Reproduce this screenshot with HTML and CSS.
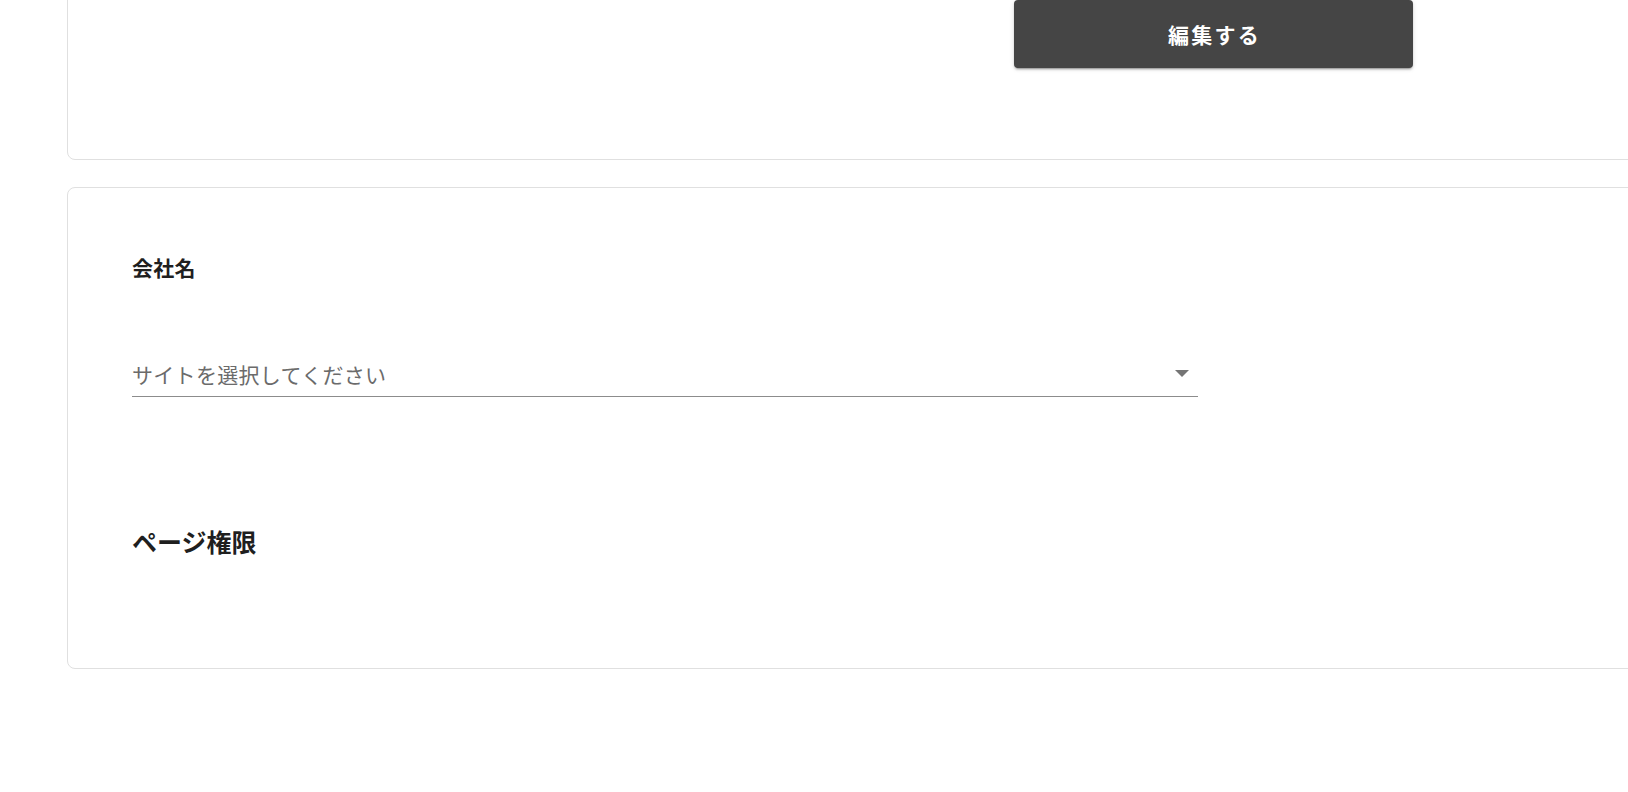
FILE: index.html
```html
<!DOCTYPE html>
<html lang="ja">
<head>
<meta charset="utf-8">
<title>設定</title>
<link rel="stylesheet" href="styles.css">
</head>
<body>
<main class="page">
  <section class="card card-top">
    <button class="edit-btn" type="button">編集する</button>
  </section>
  <section class="card card-main">
    <div class="field-label">会社名</div>
    <div class="select">
      <span class="select-placeholder">サイトを選択してください</span>
      <svg class="select-arrow" width="14" height="7" viewBox="0 0 14 7" aria-hidden="true"><polygon points="0,0 14,0 7,7" fill="#757575"/></svg>
    </div>
    <h2 class="section-title">ページ権限</h2>
  </section>
</main>
</body>
</html>
```
FILE: styles.css
```css
html, body {
  margin: 0;
  padding: 0;
  background: #ffffff;
  overflow: hidden;
}
body {
  font-family: "Noto Sans CJK JP", "Noto Sans", sans-serif;
  color: #212121;
  width: 1628px;
  height: 792px;
}
.page {
  padding-left: 67px;
  display: flex;
  flex-direction: column;
  gap: 27px;
}
.card {
  width: 1640px;
  border: 1px solid #e0e0e0;
  border-radius: 8px;
  background: #fff;
  box-sizing: border-box;
}
.card-top {
  margin-top: -100px;
  padding: 99px 0 91px 946px;
  display: flex;
}
.edit-btn {
  width: 399px;
  height: 68px;
  border: none;
  border-radius: 4px;
  background: #454545;
  color: #fff;
  font-family: "Noto Sans CJK JP", sans-serif;
  font-size: 21px;
  font-weight: 700;
  letter-spacing: 0.11em;
  padding: 0 0 0 2px;
  box-shadow: 0 3px 1px -2px rgba(0,0,0,.2), 0 2px 2px 0 rgba(0,0,0,.14), 0 1px 5px 0 rgba(0,0,0,.12);
}
.card-main {
  padding: 64px 0 108px 64px;
  display: flex;
  flex-direction: column;
  align-items: flex-start;
}
.field-label {
  font-size: 21px;
  line-height: 30px;
  font-weight: 700;
  color: #1f1f1f;
  letter-spacing: 0.2px;
}
.select {
  margin-top: 77px;
  width: 1066px;
  box-sizing: border-box;
  display: flex;
  align-items: center;
  justify-content: space-between;
  padding: 0 9px 7px 0;
  border-bottom: 1px solid #8c8c8c;
}
.select-placeholder {
  font-size: 21px;
  line-height: 30px;
  color: #6b6b6b;
  letter-spacing: 0.3px;
}
.select-arrow {
  display: block;
  margin-bottom: 2px;
}
.section-title {
  margin: 126px 0 0;
  font-size: 25px;
  line-height: 37px;
  font-weight: 700;
  color: #1f1f1f;
}
```
